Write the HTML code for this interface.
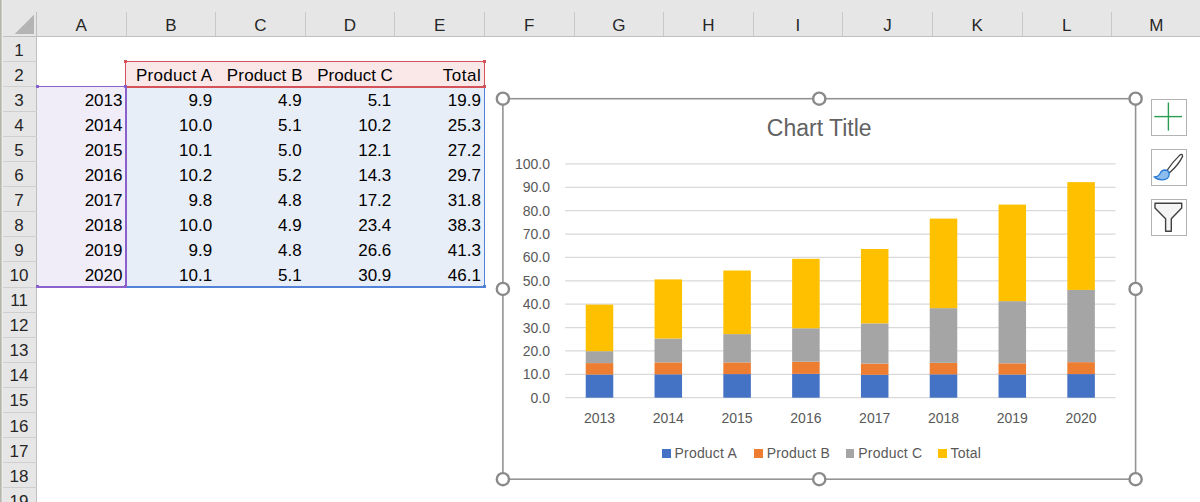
<!DOCTYPE html><html><head><meta charset="utf-8"><style>
*{margin:0;padding:0;box-sizing:border-box}
html,body{width:1200px;height:502px;overflow:hidden;background:#fff;font-family:"Liberation Sans", sans-serif}
.a{position:absolute}
.t{position:absolute;white-space:nowrap;line-height:20px;height:20px}
</style></head><body><div class="a" style="left:0;top:0;width:1200px;height:36.3px;background:#e6e6e6"></div>
<div class="a" style="left:0;top:0;width:36.6px;height:502px;background:#e6e6e6"></div>
<div class="a" style="left:0;top:35.699999999999996px;width:1200px;height:1.2px;background:#bfbfbf"></div>
<div class="a" style="left:36.0px;top:12px;width:1.2px;height:502px;background:#bfbfbf"></div>
<svg class="a" style="left:0;top:0" width="40" height="40"><polygon points="34,14.7 34,34 14.7,34" fill="#b4b4b4"/></svg>
<div class="a" style="left:125.5px;top:12px;width:1px;height:24.299999999999997px;background:#c8c8c8"></div>
<div class="t" style="left:36.6px;top:16.299999999999997px;width:89.4px;text-align:center;font-size:17px;color:#262626">A</div>
<div class="a" style="left:215.1px;top:12px;width:1px;height:24.299999999999997px;background:#c8c8c8"></div>
<div class="t" style="left:126.0px;top:16.299999999999997px;width:89.6px;text-align:center;font-size:17px;color:#262626">B</div>
<div class="a" style="left:304.7px;top:12px;width:1px;height:24.299999999999997px;background:#c8c8c8"></div>
<div class="t" style="left:215.6px;top:16.299999999999997px;width:89.6px;text-align:center;font-size:17px;color:#262626">C</div>
<div class="a" style="left:394.3px;top:12px;width:1px;height:24.299999999999997px;background:#c8c8c8"></div>
<div class="t" style="left:305.2px;top:16.299999999999997px;width:89.60000000000002px;text-align:center;font-size:17px;color:#262626">D</div>
<div class="a" style="left:483.9px;top:12px;width:1px;height:24.299999999999997px;background:#c8c8c8"></div>
<div class="t" style="left:394.8px;top:16.299999999999997px;width:89.59999999999997px;text-align:center;font-size:17px;color:#262626">E</div>
<div class="a" style="left:573.5px;top:12px;width:1px;height:24.299999999999997px;background:#c8c8c8"></div>
<div class="t" style="left:484.4px;top:16.299999999999997px;width:89.60000000000002px;text-align:center;font-size:17px;color:#262626">F</div>
<div class="a" style="left:663.1px;top:12px;width:1px;height:24.299999999999997px;background:#c8c8c8"></div>
<div class="t" style="left:574.0px;top:16.299999999999997px;width:89.60000000000002px;text-align:center;font-size:17px;color:#262626">G</div>
<div class="a" style="left:752.7px;top:12px;width:1px;height:24.299999999999997px;background:#c8c8c8"></div>
<div class="t" style="left:663.6px;top:16.299999999999997px;width:89.60000000000002px;text-align:center;font-size:17px;color:#262626">H</div>
<div class="a" style="left:842.3px;top:12px;width:1px;height:24.299999999999997px;background:#c8c8c8"></div>
<div class="t" style="left:753.2px;top:16.299999999999997px;width:89.59999999999991px;text-align:center;font-size:17px;color:#262626">I</div>
<div class="a" style="left:931.9px;top:12px;width:1px;height:24.299999999999997px;background:#c8c8c8"></div>
<div class="t" style="left:842.8px;top:16.299999999999997px;width:89.60000000000002px;text-align:center;font-size:17px;color:#262626">J</div>
<div class="a" style="left:1021.5px;top:12px;width:1px;height:24.299999999999997px;background:#c8c8c8"></div>
<div class="t" style="left:932.4px;top:16.299999999999997px;width:89.60000000000002px;text-align:center;font-size:17px;color:#262626">K</div>
<div class="a" style="left:1111.1px;top:12px;width:1px;height:24.299999999999997px;background:#c8c8c8"></div>
<div class="t" style="left:1022.0px;top:16.299999999999997px;width:89.59999999999991px;text-align:center;font-size:17px;color:#262626">L</div>
<div class="a" style="left:1200.7px;top:12px;width:1px;height:24.299999999999997px;background:#c8c8c8"></div>
<div class="t" style="left:1111.6px;top:16.299999999999997px;width:89.60000000000014px;text-align:center;font-size:17px;color:#262626">M</div>
<div class="a" style="left:1.5px;top:60.87px;width:35.1px;height:1px;background:#cfcfcf"></div>
<div class="t" style="left:1.5px;top:40.5px;width:35.1px;text-align:center;font-size:17px;color:#262626">1</div>
<div class="a" style="left:1.5px;top:85.94px;width:35.1px;height:1px;background:#cfcfcf"></div>
<div class="t" style="left:1.5px;top:65.57px;width:35.1px;text-align:center;font-size:17px;color:#262626">2</div>
<div class="a" style="left:1.5px;top:111.00999999999999px;width:35.1px;height:1px;background:#cfcfcf"></div>
<div class="t" style="left:1.5px;top:90.64px;width:35.1px;text-align:center;font-size:17px;color:#262626">3</div>
<div class="a" style="left:1.5px;top:136.08px;width:35.1px;height:1px;background:#cfcfcf"></div>
<div class="t" style="left:1.5px;top:115.71000000000001px;width:35.1px;text-align:center;font-size:17px;color:#262626">4</div>
<div class="a" style="left:1.5px;top:161.14999999999998px;width:35.1px;height:1px;background:#cfcfcf"></div>
<div class="t" style="left:1.5px;top:140.77999999999997px;width:35.1px;text-align:center;font-size:17px;color:#262626">5</div>
<div class="a" style="left:1.5px;top:186.21999999999997px;width:35.1px;height:1px;background:#cfcfcf"></div>
<div class="t" style="left:1.5px;top:165.84999999999997px;width:35.1px;text-align:center;font-size:17px;color:#262626">6</div>
<div class="a" style="left:1.5px;top:211.29000000000002px;width:35.1px;height:1px;background:#cfcfcf"></div>
<div class="t" style="left:1.5px;top:190.92000000000002px;width:35.1px;text-align:center;font-size:17px;color:#262626">7</div>
<div class="a" style="left:1.5px;top:236.36px;width:35.1px;height:1px;background:#cfcfcf"></div>
<div class="t" style="left:1.5px;top:215.99px;width:35.1px;text-align:center;font-size:17px;color:#262626">8</div>
<div class="a" style="left:1.5px;top:261.43px;width:35.1px;height:1px;background:#cfcfcf"></div>
<div class="t" style="left:1.5px;top:241.06px;width:35.1px;text-align:center;font-size:17px;color:#262626">9</div>
<div class="a" style="left:1.5px;top:286.5px;width:35.1px;height:1px;background:#cfcfcf"></div>
<div class="t" style="left:1.5px;top:266.13px;width:35.1px;text-align:center;font-size:17px;color:#262626">10</div>
<div class="a" style="left:1.5px;top:311.57px;width:35.1px;height:1px;background:#cfcfcf"></div>
<div class="t" style="left:1.5px;top:291.2px;width:35.1px;text-align:center;font-size:17px;color:#262626">11</div>
<div class="a" style="left:1.5px;top:336.64px;width:35.1px;height:1px;background:#cfcfcf"></div>
<div class="t" style="left:1.5px;top:316.27px;width:35.1px;text-align:center;font-size:17px;color:#262626">12</div>
<div class="a" style="left:1.5px;top:361.71000000000004px;width:35.1px;height:1px;background:#cfcfcf"></div>
<div class="t" style="left:1.5px;top:341.34000000000003px;width:35.1px;text-align:center;font-size:17px;color:#262626">13</div>
<div class="a" style="left:1.5px;top:386.78000000000003px;width:35.1px;height:1px;background:#cfcfcf"></div>
<div class="t" style="left:1.5px;top:366.41px;width:35.1px;text-align:center;font-size:17px;color:#262626">14</div>
<div class="a" style="left:1.5px;top:411.85px;width:35.1px;height:1px;background:#cfcfcf"></div>
<div class="t" style="left:1.5px;top:391.48px;width:35.1px;text-align:center;font-size:17px;color:#262626">15</div>
<div class="a" style="left:1.5px;top:436.92px;width:35.1px;height:1px;background:#cfcfcf"></div>
<div class="t" style="left:1.5px;top:416.55px;width:35.1px;text-align:center;font-size:17px;color:#262626">16</div>
<div class="a" style="left:1.5px;top:461.99px;width:35.1px;height:1px;background:#cfcfcf"></div>
<div class="t" style="left:1.5px;top:441.62px;width:35.1px;text-align:center;font-size:17px;color:#262626">17</div>
<div class="a" style="left:1.5px;top:487.06px;width:35.1px;height:1px;background:#cfcfcf"></div>
<div class="t" style="left:1.5px;top:466.69px;width:35.1px;text-align:center;font-size:17px;color:#262626">18</div>
<div class="a" style="left:1.5px;top:512.13px;width:35.1px;height:1px;background:#cfcfcf"></div>
<div class="t" style="left:1.5px;top:491.76px;width:35.1px;text-align:center;font-size:17px;color:#262626">19</div>
<div class="a" style="left:1.5px;top:537.2px;width:35.1px;height:1px;background:#cfcfcf"></div>
<div class="t" style="left:1.5px;top:516.83px;width:35.1px;text-align:center;font-size:17px;color:#262626">20</div>
<div class="a" style="left:0;top:0;width:1px;height:502px;background:#b4b6ab"></div>
<div class="a" style="left:1px;top:0;width:1px;height:502px;background:#cbccc4"></div>
<div class="a" style="left:2px;top:0;width:1px;height:502px;background:#ebebeb"></div>
<div class="a" style="left:126.0px;top:61.37px;width:358.4px;height:25.07px;background:#fae8e9"></div>
<div class="a" style="left:126.0px;top:86.44px;width:358.4px;height:200.56px;background:#e8eef8"></div>
<div class="a" style="left:36.6px;top:86.44px;width:89.4px;height:200.56px;background:#f1edf8"></div>
<div class="t" style="left:126.0px;top:66px;width:86.39999999999999px;text-align:right;font-size:17px;color:#000;letter-spacing:0.3px">Product A</div>
<div class="t" style="left:215.6px;top:66px;width:87.25px;text-align:right;font-size:17px;color:#000;letter-spacing:0.15px">Product B</div>
<div class="t" style="left:305.2px;top:66px;width:87.70000000000002px;text-align:right;font-size:17px;color:#000;">Product C</div>
<div class="t" style="left:394.8px;top:66px;width:86.39999999999996px;text-align:right;font-size:17px;color:#000;letter-spacing:0.5px">Total</div>
<div class="t" style="left:36.6px;top:91px;width:85.9px;text-align:right;font-size:17px;color:#000;">2013</div>
<div class="t" style="left:126.0px;top:91px;width:86.1px;text-align:right;font-size:17px;color:#000;">9.9</div>
<div class="t" style="left:215.6px;top:91px;width:86.1px;text-align:right;font-size:17px;color:#000;">4.9</div>
<div class="t" style="left:305.2px;top:91px;width:86.10000000000002px;text-align:right;font-size:17px;color:#000;">5.1</div>
<div class="t" style="left:394.8px;top:91px;width:86.09999999999997px;text-align:right;font-size:17px;color:#000;">19.9</div>
<div class="t" style="left:36.6px;top:116px;width:85.9px;text-align:right;font-size:17px;color:#000;">2014</div>
<div class="t" style="left:126.0px;top:116px;width:86.1px;text-align:right;font-size:17px;color:#000;">10.0</div>
<div class="t" style="left:215.6px;top:116px;width:86.1px;text-align:right;font-size:17px;color:#000;">5.1</div>
<div class="t" style="left:305.2px;top:116px;width:86.10000000000002px;text-align:right;font-size:17px;color:#000;">10.2</div>
<div class="t" style="left:394.8px;top:116px;width:86.09999999999997px;text-align:right;font-size:17px;color:#000;">25.3</div>
<div class="t" style="left:36.6px;top:141px;width:85.9px;text-align:right;font-size:17px;color:#000;">2015</div>
<div class="t" style="left:126.0px;top:141px;width:86.1px;text-align:right;font-size:17px;color:#000;">10.1</div>
<div class="t" style="left:215.6px;top:141px;width:86.1px;text-align:right;font-size:17px;color:#000;">5.0</div>
<div class="t" style="left:305.2px;top:141px;width:86.10000000000002px;text-align:right;font-size:17px;color:#000;">12.1</div>
<div class="t" style="left:394.8px;top:141px;width:86.09999999999997px;text-align:right;font-size:17px;color:#000;">27.2</div>
<div class="t" style="left:36.6px;top:166px;width:85.9px;text-align:right;font-size:17px;color:#000;">2016</div>
<div class="t" style="left:126.0px;top:166px;width:86.1px;text-align:right;font-size:17px;color:#000;">10.2</div>
<div class="t" style="left:215.6px;top:166px;width:86.1px;text-align:right;font-size:17px;color:#000;">5.2</div>
<div class="t" style="left:305.2px;top:166px;width:86.10000000000002px;text-align:right;font-size:17px;color:#000;">14.3</div>
<div class="t" style="left:394.8px;top:166px;width:86.09999999999997px;text-align:right;font-size:17px;color:#000;">29.7</div>
<div class="t" style="left:36.6px;top:191px;width:85.9px;text-align:right;font-size:17px;color:#000;">2017</div>
<div class="t" style="left:126.0px;top:191px;width:86.1px;text-align:right;font-size:17px;color:#000;">9.8</div>
<div class="t" style="left:215.6px;top:191px;width:86.1px;text-align:right;font-size:17px;color:#000;">4.8</div>
<div class="t" style="left:305.2px;top:191px;width:86.10000000000002px;text-align:right;font-size:17px;color:#000;">17.2</div>
<div class="t" style="left:394.8px;top:191px;width:86.09999999999997px;text-align:right;font-size:17px;color:#000;">31.8</div>
<div class="t" style="left:36.6px;top:216px;width:85.9px;text-align:right;font-size:17px;color:#000;">2018</div>
<div class="t" style="left:126.0px;top:216px;width:86.1px;text-align:right;font-size:17px;color:#000;">10.0</div>
<div class="t" style="left:215.6px;top:216px;width:86.1px;text-align:right;font-size:17px;color:#000;">4.9</div>
<div class="t" style="left:305.2px;top:216px;width:86.10000000000002px;text-align:right;font-size:17px;color:#000;">23.4</div>
<div class="t" style="left:394.8px;top:216px;width:86.09999999999997px;text-align:right;font-size:17px;color:#000;">38.3</div>
<div class="t" style="left:36.6px;top:241px;width:85.9px;text-align:right;font-size:17px;color:#000;">2019</div>
<div class="t" style="left:126.0px;top:241px;width:86.1px;text-align:right;font-size:17px;color:#000;">9.9</div>
<div class="t" style="left:215.6px;top:241px;width:86.1px;text-align:right;font-size:17px;color:#000;">4.8</div>
<div class="t" style="left:305.2px;top:241px;width:86.10000000000002px;text-align:right;font-size:17px;color:#000;">26.6</div>
<div class="t" style="left:394.8px;top:241px;width:86.09999999999997px;text-align:right;font-size:17px;color:#000;">41.3</div>
<div class="t" style="left:36.6px;top:266px;width:85.9px;text-align:right;font-size:17px;color:#000;">2020</div>
<div class="t" style="left:126.0px;top:266px;width:86.1px;text-align:right;font-size:17px;color:#000;">10.1</div>
<div class="t" style="left:215.6px;top:266px;width:86.1px;text-align:right;font-size:17px;color:#000;">5.1</div>
<div class="t" style="left:305.2px;top:266px;width:86.10000000000002px;text-align:right;font-size:17px;color:#000;">30.9</div>
<div class="t" style="left:394.8px;top:266px;width:86.09999999999997px;text-align:right;font-size:17px;color:#000;">46.1</div>
<div class="a" style="left:126.0px;top:286.4px;width:358.4px;height:1.2px;background:#5282d8"></div>
<div class="a" style="left:483.79999999999995px;top:86.44px;width:1.2px;height:200.56px;background:#5282d8"></div>
<div class="a" style="left:36.6px;top:85.84px;width:89.4px;height:1.2px;background:#8a60cc"></div>
<div class="a" style="left:36.6px;top:286.4px;width:89.4px;height:1.2px;background:#8a60cc"></div>
<div class="a" style="left:125.4px;top:86.44px;width:1.2px;height:200.56px;background:#8a60cc"></div>
<div class="a" style="left:126.0px;top:60.62px;width:358.4px;height:1.5px;background:#d4525a"></div>
<div class="a" style="left:126.0px;top:86.28999999999999px;width:358.4px;height:1.5px;background:#d4525a"></div>
<div class="a" style="left:124.95px;top:61.37px;width:1.5px;height:25.07px;background:#d4525a"></div>
<div class="a" style="left:483.65px;top:61.37px;width:1.5px;height:25.07px;background:#d4525a"></div>
<div class="a" style="left:483px;top:285px;width:3px;height:3px;background:#5282d8"></div>
<div class="a" style="left:36px;top:85px;width:3px;height:3px;background:#8a60cc"></div>
<div class="a" style="left:36px;top:285px;width:3px;height:3px;background:#8a60cc"></div>
<div class="a" style="left:124px;top:285px;width:3px;height:3px;background:#8a60cc"></div>
<div class="a" style="left:124px;top:85px;width:3px;height:3px;background:#8a60cc"></div>
<div class="a" style="left:124px;top:60px;width:3px;height:3px;background:#d4525a"></div>
<div class="a" style="left:483px;top:60px;width:3px;height:3px;background:#d4525a"></div>
<div class="a" style="left:483px;top:85px;width:3px;height:3px;background:#d4525a"></div>
<div class="a" style="left:502.9px;top:98.7px;width:632.6999999999999px;height:380.5px;background:#fff"></div>
<svg class="a" style="left:0;top:0" width="1200" height="502" viewBox="0 0 1200 502"><line x1="565.1" x2="1115.5" y1="397.70" y2="397.70" stroke="#d9d9d9" stroke-width="1.3"/><line x1="565.1" x2="1115.5" y1="374.32" y2="374.32" stroke="#d9d9d9" stroke-width="1.3"/><line x1="565.1" x2="1115.5" y1="350.94" y2="350.94" stroke="#d9d9d9" stroke-width="1.3"/><line x1="565.1" x2="1115.5" y1="327.56" y2="327.56" stroke="#d9d9d9" stroke-width="1.3"/><line x1="565.1" x2="1115.5" y1="304.18" y2="304.18" stroke="#d9d9d9" stroke-width="1.3"/><line x1="565.1" x2="1115.5" y1="280.80" y2="280.80" stroke="#d9d9d9" stroke-width="1.3"/><line x1="565.1" x2="1115.5" y1="257.42" y2="257.42" stroke="#d9d9d9" stroke-width="1.3"/><line x1="565.1" x2="1115.5" y1="234.04" y2="234.04" stroke="#d9d9d9" stroke-width="1.3"/><line x1="565.1" x2="1115.5" y1="210.66" y2="210.66" stroke="#d9d9d9" stroke-width="1.3"/><line x1="565.1" x2="1115.5" y1="187.28" y2="187.28" stroke="#d9d9d9" stroke-width="1.3"/><line x1="565.1" x2="1115.5" y1="163.90" y2="163.90" stroke="#d9d9d9" stroke-width="1.3"/><rect x="585.74" y="374.55" width="27.52" height="23.15" fill="#4472c4"/><rect x="585.74" y="363.10" width="27.52" height="11.46" fill="#ed7d31"/><rect x="585.74" y="351.17" width="27.52" height="11.92" fill="#a5a5a5"/><rect x="585.74" y="304.65" width="27.52" height="46.53" fill="#ffc000"/><rect x="654.54" y="374.32" width="27.52" height="23.38" fill="#4472c4"/><rect x="654.54" y="362.40" width="27.52" height="11.92" fill="#ed7d31"/><rect x="654.54" y="338.55" width="27.52" height="23.85" fill="#a5a5a5"/><rect x="654.54" y="279.40" width="27.52" height="59.15" fill="#ffc000"/><rect x="723.34" y="374.09" width="27.52" height="23.61" fill="#4472c4"/><rect x="723.34" y="362.40" width="27.52" height="11.69" fill="#ed7d31"/><rect x="723.34" y="334.11" width="27.52" height="28.29" fill="#a5a5a5"/><rect x="723.34" y="270.51" width="27.52" height="63.59" fill="#ffc000"/><rect x="792.14" y="373.85" width="27.52" height="23.85" fill="#4472c4"/><rect x="792.14" y="361.69" width="27.52" height="12.16" fill="#ed7d31"/><rect x="792.14" y="328.26" width="27.52" height="33.43" fill="#a5a5a5"/><rect x="792.14" y="258.82" width="27.52" height="69.44" fill="#ffc000"/><rect x="860.94" y="374.79" width="27.52" height="22.91" fill="#4472c4"/><rect x="860.94" y="363.57" width="27.52" height="11.22" fill="#ed7d31"/><rect x="860.94" y="323.35" width="27.52" height="40.21" fill="#a5a5a5"/><rect x="860.94" y="249.00" width="27.52" height="74.35" fill="#ffc000"/><rect x="929.74" y="374.32" width="27.52" height="23.38" fill="#4472c4"/><rect x="929.74" y="362.86" width="27.52" height="11.46" fill="#ed7d31"/><rect x="929.74" y="308.15" width="27.52" height="54.71" fill="#a5a5a5"/><rect x="929.74" y="218.61" width="27.52" height="89.55" fill="#ffc000"/><rect x="998.54" y="374.55" width="27.52" height="23.15" fill="#4472c4"/><rect x="998.54" y="363.33" width="27.52" height="11.22" fill="#ed7d31"/><rect x="998.54" y="301.14" width="27.52" height="62.19" fill="#a5a5a5"/><rect x="998.54" y="204.58" width="27.52" height="96.56" fill="#ffc000"/><rect x="1067.34" y="374.09" width="27.52" height="23.61" fill="#4472c4"/><rect x="1067.34" y="362.16" width="27.52" height="11.92" fill="#ed7d31"/><rect x="1067.34" y="289.92" width="27.52" height="72.24" fill="#a5a5a5"/><rect x="1067.34" y="182.14" width="27.52" height="107.78" fill="#ffc000"/><rect x="502.9" y="98.7" width="632.6999999999999" height="380.5" fill="none" stroke="#939393" stroke-width="1.6"/><circle cx="502.90" cy="98.70" r="6.1" fill="#fff" stroke="#8a8a8a" stroke-width="2.4"/><circle cx="819.25" cy="98.70" r="6.1" fill="#fff" stroke="#8a8a8a" stroke-width="2.4"/><circle cx="1135.60" cy="98.70" r="6.1" fill="#fff" stroke="#8a8a8a" stroke-width="2.4"/><circle cx="502.90" cy="288.95" r="6.1" fill="#fff" stroke="#8a8a8a" stroke-width="2.4"/><circle cx="1135.60" cy="288.95" r="6.1" fill="#fff" stroke="#8a8a8a" stroke-width="2.4"/><circle cx="502.90" cy="479.20" r="6.1" fill="#fff" stroke="#8a8a8a" stroke-width="2.4"/><circle cx="819.25" cy="479.20" r="6.1" fill="#fff" stroke="#8a8a8a" stroke-width="2.4"/><circle cx="1135.60" cy="479.20" r="6.1" fill="#fff" stroke="#8a8a8a" stroke-width="2.4"/></svg>
<div class="t" style="left:502.9px;top:118px;width:632.6999999999999px;text-align:center;font-size:23px;line-height:20px;color:#626262">Chart Title</div>
<div class="t" style="left:480px;top:387.7px;width:70px;text-align:right;font-size:14px;color:#595959">0.0</div>
<div class="t" style="left:480px;top:364.32px;width:70px;text-align:right;font-size:14px;color:#595959">10.0</div>
<div class="t" style="left:480px;top:340.94px;width:70px;text-align:right;font-size:14px;color:#595959">20.0</div>
<div class="t" style="left:480px;top:317.56px;width:70px;text-align:right;font-size:14px;color:#595959">30.0</div>
<div class="t" style="left:480px;top:294.17999999999995px;width:70px;text-align:right;font-size:14px;color:#595959">40.0</div>
<div class="t" style="left:480px;top:270.79999999999995px;width:70px;text-align:right;font-size:14px;color:#595959">50.0</div>
<div class="t" style="left:480px;top:247.41999999999996px;width:70px;text-align:right;font-size:14px;color:#595959">60.0</div>
<div class="t" style="left:480px;top:224.04px;width:70px;text-align:right;font-size:14px;color:#595959">70.0</div>
<div class="t" style="left:480px;top:200.65999999999997px;width:70px;text-align:right;font-size:14px;color:#595959">80.0</div>
<div class="t" style="left:480px;top:177.27999999999997px;width:70px;text-align:right;font-size:14px;color:#595959">90.0</div>
<div class="t" style="left:480px;top:153.89999999999998px;width:70px;text-align:right;font-size:14px;color:#595959">100.0</div>
<div class="t" style="left:559.5px;top:407.6px;width:80px;text-align:center;font-size:14px;color:#595959">2013</div>
<div class="t" style="left:628.3px;top:407.6px;width:80px;text-align:center;font-size:14px;color:#595959">2014</div>
<div class="t" style="left:697.1px;top:407.6px;width:80px;text-align:center;font-size:14px;color:#595959">2015</div>
<div class="t" style="left:765.9px;top:407.6px;width:80px;text-align:center;font-size:14px;color:#595959">2016</div>
<div class="t" style="left:834.7px;top:407.6px;width:80px;text-align:center;font-size:14px;color:#595959">2017</div>
<div class="t" style="left:903.5px;top:407.6px;width:80px;text-align:center;font-size:14px;color:#595959">2018</div>
<div class="t" style="left:972.3px;top:407.6px;width:80px;text-align:center;font-size:14px;color:#595959">2019</div>
<div class="t" style="left:1041.1px;top:407.6px;width:80px;text-align:center;font-size:14px;color:#595959">2020</div>
<div class="a" style="left:662.0px;top:449.2px;width:8.5px;height:8.5px;background:#4472c4"></div>
<div class="t" style="left:674.5px;top:442.5px;font-size:14px;letter-spacing:0.2px;color:#595959">Product A</div>
<div class="a" style="left:754.2px;top:449.2px;width:8.5px;height:8.5px;background:#ed7d31"></div>
<div class="t" style="left:766.7px;top:442.5px;font-size:14px;letter-spacing:0.2px;color:#595959">Product B</div>
<div class="a" style="left:845.8px;top:449.2px;width:8.5px;height:8.5px;background:#a5a5a5"></div>
<div class="t" style="left:858.3px;top:442.5px;font-size:14px;letter-spacing:0.2px;color:#595959">Product C</div>
<div class="a" style="left:938.0px;top:449.2px;width:8.5px;height:8.5px;background:#ffc000"></div>
<div class="t" style="left:950.5px;top:442.5px;font-size:14px;letter-spacing:0.2px;color:#595959">Total</div>
<div class="a" style="left:1151px;top:99px;width:36px;height:36.5px;border:1.4px solid #b3b3b3;background:#fff"></div>
<div class="a" style="left:1151px;top:149px;width:36px;height:36.5px;border:1.4px solid #b3b3b3;background:#fff"></div>
<div class="a" style="left:1151px;top:199px;width:36px;height:36.5px;border:1.4px solid #b3b3b3;background:#fff"></div>
<svg class="a" style="left:0;top:0" width="1200" height="502" viewBox="0 0 1200 502">
<line x1="1154.3" x2="1182" y1="116.6" y2="116.6" stroke="#2a9d52" stroke-width="1.4"/>
<line x1="1168.4" x2="1168.4" y1="102.5" y2="130.6" stroke="#2a9d52" stroke-width="1.4"/>
<path d="M1166.9,170.6 Q1173,161.5 1179.3,155.6 Q1182.6,153 1182.6,156.4 Q1178.5,165 1169.5,172.8 Z" fill="#fff" stroke="#404040" stroke-width="1.3" stroke-linejoin="round"/>
<path d="M1154,176.8 Q1158.5,177 1160,173.5 Q1161.5,170 1165,170 Q1169.3,170.3 1169.2,174.5 Q1168.8,179.5 1162.5,179.8 Q1157.5,180 1154,176.8 Z" fill="#8dbdee" stroke="#2a7bd4" stroke-width="1.3" stroke-linejoin="round"/>
<path d="M1155,203.3 L1181.7,203.3 L1181.7,208 L1171.3,218.7 L1171.3,231.3 L1165.6,231.3 L1165.6,218.7 L1155,208 Z" fill="#f5f5f5" stroke="#404040" stroke-width="1.4" stroke-linejoin="round"/>
</svg></body></html>
